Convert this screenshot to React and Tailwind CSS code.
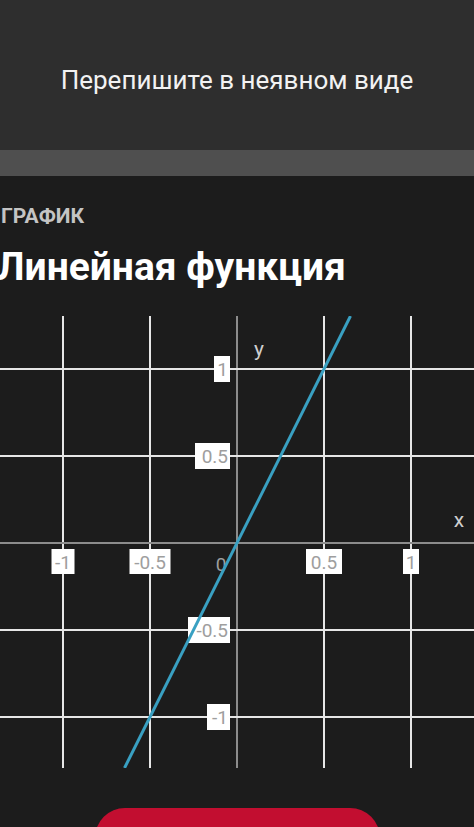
import React from 'react';

const GRID = [63, 150, 237, 324, 411];
const ROWS = [53, 140, 227, 314, 401];

const yLabels = [
  { t: '1', y: 53, w: 16 },
  { t: '0.5', y: 140, w: 35 },
  { t: '-0.5', y: 314, w: 42 },
  { t: '-1', y: 401, w: 23 },
];

const xLabels = [
  { t: '-1', x: 63, w: 23 },
  { t: '-0.5', x: 150, w: 41 },
  { t: '0.5', x: 324, w: 36 },
  { t: '1', x: 411, w: 16 },
];

const Chart = () => (
  <svg width="474" height="452" viewBox="0 0 474 452" className="block">
    {GRID.map(x => (
      <line key={'v' + x} x1={x} y1="0" x2={x} y2="452" stroke={x === 237 ? '#8c8c8c' : '#e6e6e6'} strokeWidth="2" />
    ))}
    {ROWS.map(y => (
      <line key={'h' + y} x1="0" y1={y} x2="474" y2={y} stroke={y === 227 ? '#8c8c8c' : '#e6e6e6'} strokeWidth="2" />
    ))}
    <g fontFamily="Roboto, 'Noto Sans', sans-serif" fontSize="19" fill="#9e9e9e">
      {yLabels.map(l => (
        <g key={'yl' + l.t}>
          <rect x={230 - l.w} y={l.y - 13} width={l.w} height="26" fill="#ffffff" />
          <text x={228} y={l.y + 7} textAnchor="end">{l.t}</text>
        </g>
      ))}
      {xLabels.map(l => (
        <g key={'xl' + l.t}>
          <rect x={l.x - l.w / 2} y="233" width={l.w} height="25" fill="#ffffff" />
          <text x={l.x} y="253" textAnchor="middle">{l.t}</text>
        </g>
      ))}
      <text x="221" y="255" textAnchor="middle">0</text>
    </g>
    <text x="259" y="40" textAnchor="middle" fontFamily="Roboto, 'Noto Sans', sans-serif" fontSize="21" fill="#cfcfcf">y</text>
    <text x="459" y="211" textAnchor="middle" fontFamily="Roboto, 'Noto Sans', sans-serif" fontSize="21" fill="#cfcfcf">x</text>
    <line x1="124.5" y1="452" x2="350.5" y2="0" stroke="#39a0c2" strokeWidth="3" />
  </svg>
);

export default function App() {
  return (
    <div className="w-[474px] h-[827px] overflow-hidden bg-[#1c1c1c]" style={{ fontFamily: "Roboto, 'Noto Sans', sans-serif" }}>
      <div className="h-[150px] bg-[#2e2e2e] flex items-center justify-center pt-[10px]">
        <span className="text-[26px] text-[#f2f2f2]">Перепишите в неявном виде</span>
      </div>
      <div className="h-[26px] bg-[#4f4f4f]" />
      <div className="pt-[30px]">
        <div className="text-[21px] font-bold text-[#c4c4c4] leading-none ml-[1px]">ГРАФИК</div>
        <div className="text-[39px] font-bold text-white leading-none mt-[21px] ml-[-3px]">Линейная функция</div>
      </div>
      <div className="mt-[29px]">
        <Chart />
      </div>
      <div className="mt-[40px] mx-auto w-[285px] h-[60px] rounded-[32px] bg-[#c20e30]" />
    </div>
  );
}
